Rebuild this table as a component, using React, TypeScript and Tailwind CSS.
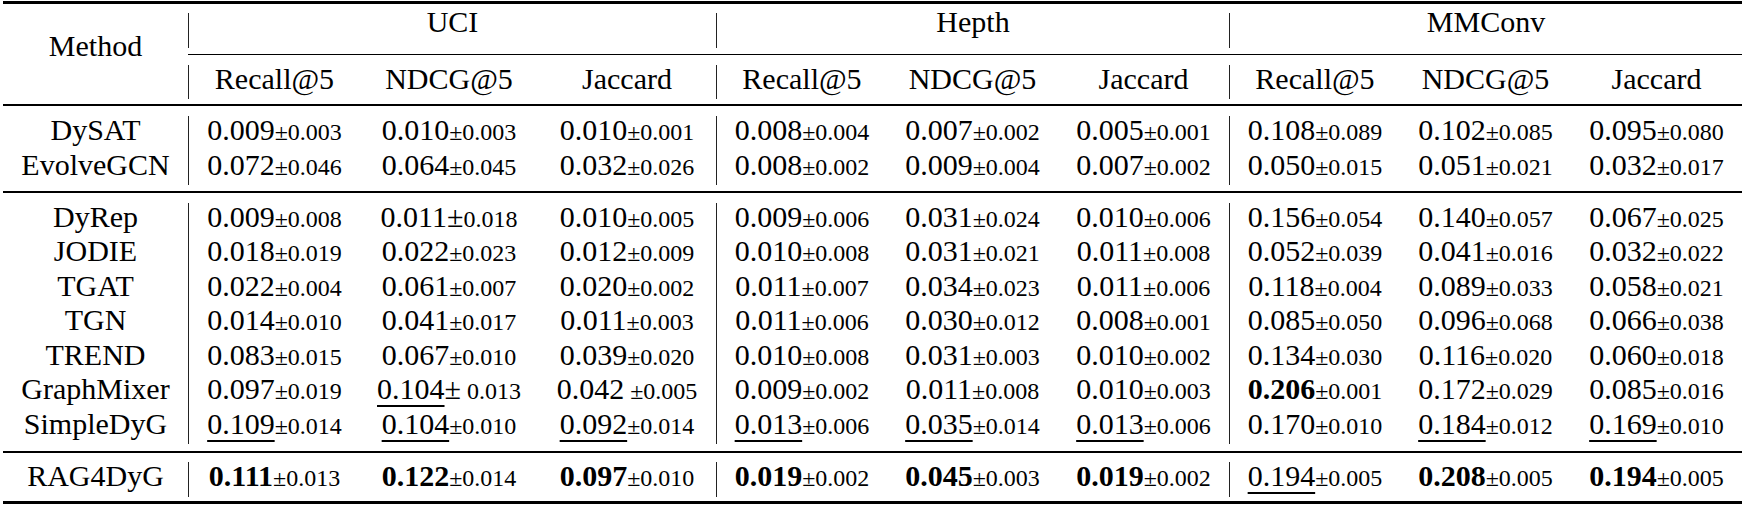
import clsx from "clsx";

type Cell = { v: string; s: string; b?: boolean; u?: boolean; big?: boolean; pre?: boolean; mid?: boolean };

// column template shared by every row: Method + 3 datasets x 3 metrics
const GRID = "grid grid-cols-[185px_172px_178px_178px_171px_171px_171px_171px_171px_171px]";

const c = (v: string, s: string, flags: Partial<Cell> = {}): Cell => ({ v, s, ...flags });
const B = { b: true };
const U = { u: true };

const baselines: [string, Cell[]][] = [
  ["DySAT", [c("0.009", "0.003"), c("0.010", "0.003"), c("0.010", "0.001"), c("0.008", "0.004"), c("0.007", "0.002"), c("0.005", "0.001"), c("0.108", "0.089"), c("0.102", "0.085"), c("0.095", "0.080")]],
  ["EvolveGCN", [c("0.072", "0.046"), c("0.064", "0.045"), c("0.032", "0.026"), c("0.008", "0.002"), c("0.009", "0.004"), c("0.007", "0.002"), c("0.050", "0.015"), c("0.051", "0.021"), c("0.032", "0.017")]],
];

const dynamic: [string, Cell[]][] = [
  ["DyRep", [c("0.009", "0.008"), c("0.011", "0.018", { big: true }), c("0.010", "0.005"), c("0.009", "0.006"), c("0.031", "0.024"), c("0.010", "0.006"), c("0.156", "0.054"), c("0.140", "0.057"), c("0.067", "0.025")]],
  ["JODIE", [c("0.018", "0.019"), c("0.022", "0.023"), c("0.012", "0.009"), c("0.010", "0.008"), c("0.031", "0.021"), c("0.011", "0.008"), c("0.052", "0.039"), c("0.041", "0.016"), c("0.032", "0.022")]],
  ["TGAT", [c("0.022", "0.004"), c("0.061", "0.007"), c("0.020", "0.002"), c("0.011", "0.007"), c("0.034", "0.023"), c("0.011", "0.006"), c("0.118", "0.004"), c("0.089", "0.033"), c("0.058", "0.021")]],
  ["TGN", [c("0.014", "0.010"), c("0.041", "0.017"), c("0.011", "0.003"), c("0.011", "0.006"), c("0.030", "0.012"), c("0.008", "0.001"), c("0.085", "0.050"), c("0.096", "0.068"), c("0.066", "0.038")]],
  ["TREND", [c("0.083", "0.015"), c("0.067", "0.010"), c("0.039", "0.020"), c("0.010", "0.008"), c("0.031", "0.003"), c("0.010", "0.002"), c("0.134", "0.030"), c("0.116", "0.020"), c("0.060", "0.018")]],
  ["GraphMixer", [c("0.097", "0.019"), c("0.104", "0.013", { u: true, big: true, mid: true }), c("0.042", "0.005", { pre: true }), c("0.009", "0.002"), c("0.011", "0.008"), c("0.010", "0.003"), c("0.206", "0.001", B), c("0.172", "0.029"), c("0.085", "0.016")]],
  ["SimpleDyG", [c("0.109", "0.014", U), c("0.104", "0.010", U), c("0.092", "0.014", U), c("0.013", "0.006", U), c("0.035", "0.014", U), c("0.013", "0.006", U), c("0.170", "0.010"), c("0.184", "0.012", U), c("0.169", "0.010", U)]],
];

const ours: [string, Cell[]] = ["RAG4DyG", [c("0.111", "0.013", B), c("0.122", "0.014", B), c("0.097", "0.010", B), c("0.019", "0.002", B), c("0.045", "0.003", B), c("0.019", "0.002", B), c("0.194", "0.005", U), c("0.208", "0.005", B), c("0.194", "0.005", B)]];

const metrics = ["Recall@5", "NDCG@5", "Jaccard"];

function Val({ cell }: { cell: Cell }) {
  return (
    <span className="whitespace-nowrap">
      <span className={clsx(cell.b && "font-bold", cell.u && "underline decoration-[1.5px] underline-offset-[6px]")}>{cell.v}</span>
      {cell.pre && <span className="text-[24px]"> </span>}
      <span className={cell.big ? "text-[30px]" : "text-[24px]"}>±</span>
      {cell.mid && <span className="text-[24px]"> </span>}
      <span className="text-[24px]">{cell.s}</span>
    </span>
  );
}

function Row({ name, cells }: { name: string; cells: Cell[] }) {
  return (
    <div className={`${GRID} h-[34.5px] leading-[28px]`}>
      <div className="text-center">{name}</div>
      {cells.map((cell, i) => (
        <div key={i} className={clsx("text-center", i % 3 === 0 && "border-l border-[#222]")}>
          <Val cell={cell} />
        </div>
      ))}
    </div>
  );
}

const Rule = ({ h }: { h: string }) => <div className={clsx("bg-black", h)} />;

export default function App() {
  return (
    <div className="w-[1746px] h-[509px] bg-white overflow-hidden text-black font-['Liberation_Serif',serif] text-[30px]">
      <div className="ml-[3px] mt-[1px] w-[1739px] flex flex-col">
        <Rule h="h-[3px]" />
        <div className="h-[9px]" />

        {/* header: dataset groups, cmidrule, metric names */}
        <div className={`${GRID} grid-rows-[34.5px_6px_1px_10px_34.5px] leading-[28px]`}>
          <div className="col-start-1 row-start-1 row-span-5 text-center pt-[19px]">Method</div>
          <div className="col-start-2 col-span-3 row-start-1 border-l border-[#222] text-center leading-[18px]">UCI</div>
          <div className="col-start-5 col-span-3 row-start-1 border-l border-[#222] text-center leading-[18px]">Hepth</div>
          <div className="col-start-8 col-span-3 row-start-1 border-l border-[#222] text-center leading-[18px]">MMConv</div>
          <div className="col-start-2 col-span-9 row-start-3 bg-black" />
          {[0, 1, 2].map((g) =>
            metrics.map((m, i) => (
              <div
                key={`${g}-${m}`}
                className={clsx("row-start-5 text-center", i === 0 && "border-l border-[#222]")}
              >
                {m}
              </div>
            ))
          )}
        </div>

        <div className="h-[5px]" />
        <Rule h="h-[2px]" />
        <div className="h-[10px]" />
        {baselines.map(([n, cells]) => (
          <Row key={n} name={n} cells={cells} />
        ))}
        <div className="h-[5.5px]" />
        <Rule h="h-[2px]" />
        <div className="h-[10px]" />
        {dynamic.map(([n, cells]) => (
          <Row key={n} name={n} cells={cells} />
        ))}
        <div className="h-[7px]" />
        <Rule h="h-[2px]" />
        <div className="h-[9px]" />
        <Row name={ours[0]} cells={ours[1]} />
        <div className="h-[4.5px]" />
        <Rule h="h-[3px]" />
      </div>
    </div>
  );
}
